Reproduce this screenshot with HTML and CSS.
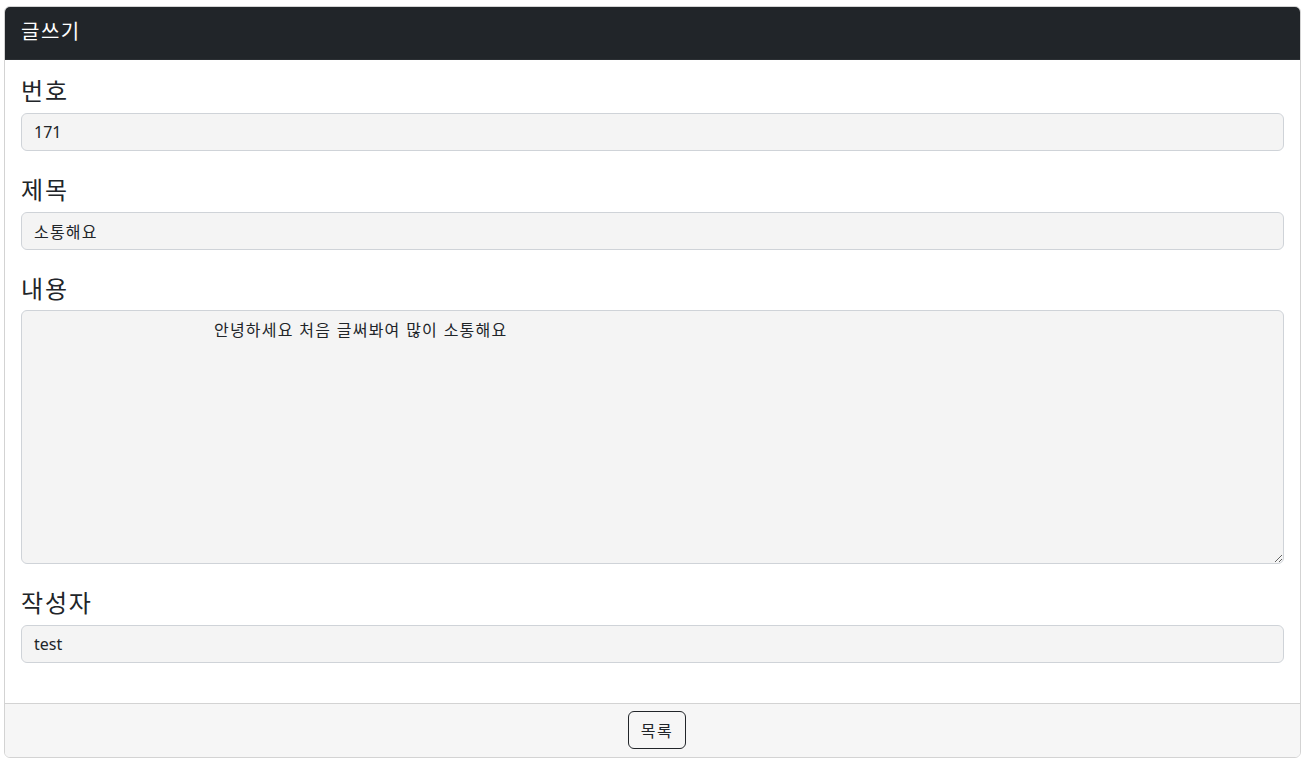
FILE: index.html
```html
<!DOCTYPE html>
<html lang="ko">
<head>
<meta charset="utf-8">
<title>글쓰기</title>
<link rel="stylesheet" href="styles.css">
</head>
<body>
<div class="card">
  <div class="card-header"><h5 class="card-title">글쓰기</h5></div>
  <div class="card-body">
    <div class="field">
      <label class="field-label">번호</label>
      <input class="form-control" type="text" value="171" readonly>
    </div>
    <div class="field">
      <label class="field-label">제목</label>
      <input class="form-control ko" type="text" value="소통해요" readonly>
    </div>
    <div class="field">
      <label class="field-label">내용</label>
      <textarea class="form-control textarea ko" rows="10" readonly>안녕하세요 처음 글써봐여 많이 소통해요</textarea>
    </div>
    <div class="field">
      <label class="field-label">작성자</label>
      <input class="form-control" type="text" value="test" readonly>
    </div>
  </div>
  <div class="card-footer">
    <button class="btn" type="button">목록</button>
  </div>
</div>
</body>
</html>
```

FILE: styles.css
```css
* { box-sizing: border-box; }
html, body {
  margin: 0;
  padding: 0;
  background: #fff;
}
body {
  font-family: "Noto Sans", "Noto Sans CJK KR", sans-serif;
  font-size: 16px;
  line-height: 1.5;
  color: #212529;
}
.card {
  margin: 6px 0 0 4px;
  width: 1297px;
  border: 1px solid #d3d3d3;
  border-radius: 6px;
  overflow: hidden;
  display: flex;
  flex-direction: column;
}
.card-header {
  background: #212529;
  color: #fff;
  padding: 12px 16px 16px;
  border-bottom: 1px solid #2b2f33;
}
.card-title {
  margin: 0;
  font-size: 20px;
  font-weight: 400;
  line-height: 24px;
  letter-spacing: 0.075em;
  font-family: "Noto Sans CJK KR", sans-serif;
}
.card-body {
  padding: 16px 16px 40px;
  display: flex;
  flex-direction: column;
  gap: 24px;
}
.field {
  display: flex;
  flex-direction: column;
}
.field-label {
  font-family: "Noto Sans CJK KR", sans-serif;
  font-size: 24px;
  line-height: 28.8px;
  letter-spacing: 0.075em;
  margin-bottom: 8px;
  font-weight: 400;
}
.form-control {
  display: block;
  width: 100%;
  height: 38px;
  padding: 6px 12px;
  font-family: "Noto Sans", "Noto Sans CJK KR", sans-serif;
  font-size: 16px;
  line-height: 24px;
  color: #212529;
  background: #f4f4f4;
  border: 1px solid #cfd3d8;
  border-radius: 6px;
  outline: none;
}
.ko {
  font-family: "Noto Sans CJK KR", sans-serif;
  letter-spacing: 0.075em;
}
.textarea {
  height: 254px;
  resize: vertical;
  text-indent: 180px;
}
.card-footer {
  background: #f6f6f6;
  border-top: 1px solid #d3d3d3;
  padding: 7px 16px 8px 25px;
  display: flex;
  justify-content: center;
}
.btn {
  height: 38px;
  padding: 6px 12px;
  font-family: "Noto Sans CJK KR", sans-serif;
  font-size: 16px;
  line-height: 24px;
  letter-spacing: 0.09em;
  color: #212529;
  background: transparent;
  border: 1px solid #212529;
  border-radius: 6px;
  cursor: pointer;
}
```
